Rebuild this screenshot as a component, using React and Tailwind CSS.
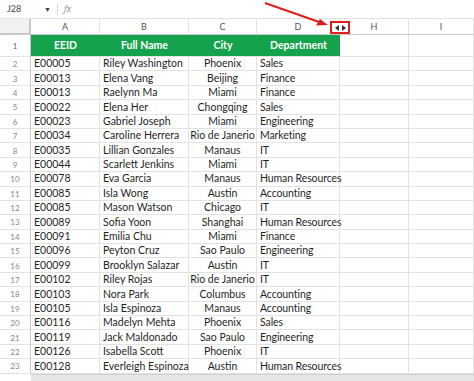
import React from "react";

const rows = [
  ["E00005", "Riley Washington", "Phoenix", "Sales"],
  ["E00013", "Elena Vang", "Beijing", "Finance"],
  ["E00013", "Raelynn Ma", "Miami", "Finance"],
  ["E00022", "Elena Her", "Chongqing", "Sales"],
  ["E00023", "Gabriel Joseph", "Miami", "Engineering"],
  ["E00034", "Caroline Herrera", "Rio de Janerio", "Marketing"],
  ["E00035", "Lillian Gonzales", "Manaus", "IT"],
  ["E00044", "Scarlett Jenkins", "Miami", "IT"],
  ["E00078", "Eva Garcia", "Manaus", "Human Resources"],
  ["E00085", "Isla Wong", "Austin", "Accounting"],
  ["E00085", "Mason Watson", "Chicago", "IT"],
  ["E00089", "Sofia Yoon", "Shanghai", "Human Resources"],
  ["E00091", "Emilia Chu", "Miami", "Finance"],
  ["E00096", "Peyton Cruz", "Sao Paulo", "Engineering"],
  ["E00099", "Brooklyn Salazar", "Austin", "IT"],
  ["E00102", "Riley Rojas", "Rio de Janerio", "IT"],
  ["E00103", "Nora Park", "Columbus", "Accounting"],
  ["E00105", "Isla Espinoza", "Manaus", "Accounting"],
  ["E00116", "Madelyn Mehta", "Phoenix", "Sales"],
  ["E00119", "Jack Maldonado", "Sao Paulo", "Engineering"],
  ["E00126", "Isabella Scott", "Phoenix", "IT"],
  ["E00128", "Everleigh Espinoza", "Austin", "Human Resources"],
];

const cell = "border-r border-b border-[#e2e3e3] flex items-center whitespace-nowrap pt-[1px]";

export default function App() {
  return (
    <div className="relative w-[474px] h-[381px] bg-white overflow-hidden text-[#1f1f1f]" style={{ fontFamily: "Lato, 'Noto Sans', sans-serif" }}>
      {/* formula bar */}
      <div className="flex items-center h-[19px] border-b border-[#e2e3e3] text-[9px] text-[#444]">
        <div className="w-[58px] flex items-center justify-between pl-[7px] pr-[6px] border-r border-[#dadce0] h-[12px]">
          <span>J28</span>
          <span className="text-[7px]">▼</span>
        </div>
        <span className="ml-[6px] italic text-[#9aa0a6] font-serif text-[10px]">fx</span>
      </div>

      {/* column letters */}
      <div className="flex h-[16px] text-[9px] text-[#555]">
        <div className="w-[31px] bg-[#f1f1f1] border-r-2 border-b-2 border-[#c8c8c8]" />
        <div className={`${cell} w-[69px] justify-center border-b-[#c8c8c8]`}>A</div>
        <div className={`${cell} w-[89px] justify-center border-b-[#c8c8c8]`}>B</div>
        <div className={`${cell} w-[68px] justify-center border-b-[#c8c8c8]`}>C</div>
        <div className={`${cell} w-[83px] justify-center border-b-[#c8c8c8]`}>D</div>
        <div className={`${cell} w-[69px] justify-center border-b-[#c8c8c8]`}>H</div>
        <div className={`${cell} flex-1 justify-center border-b-[#c8c8c8]`}>I</div>
      </div>

      {/* header row */}
      <div className="flex h-[22px] text-[10.5px]">
        <div className={`${cell} w-[31px] justify-center text-[8px] text-[#666] border-r-[#c8c8c8]`}>1</div>
        <div className="flex bg-[#14a34c] text-white font-bold border-b border-[#e2e3e3]">
          <div className="w-[69px] flex items-center justify-center">EEID</div>
          <div className="w-[89px] flex items-center justify-center">Full Name</div>
          <div className="w-[68px] flex items-center justify-center">City</div>
          <div className="w-[83px] flex items-center justify-center">Department</div>
        </div>
        <div className={`${cell} w-[69px]`} />
        <div className={`${cell} flex-1`} />
      </div>

      {/* data rows */}
      {rows.map((r, i) => (
        <div key={i} className="flex h-[14.4px] text-[10.5px]">
          <div className={`${cell} w-[31px] justify-center text-[8px] text-[#888] border-r-[#c8c8c8]`}>{i + 2}</div>
          <div className={`${cell} w-[69px] pl-[3px]`}>{r[0]}</div>
          <div className={`${cell} w-[89px] pl-[3px]`}>{r[1]}</div>
          <div className={`${cell} w-[68px] justify-center`}>{r[2]}</div>
          <div className={`${cell} w-[83px] pl-[3px] tracking-[-0.1px]`}>{r[3]}</div>
          <div className={`${cell} w-[69px]`} />
          <div className={`${cell} flex-1`} />
        </div>
      ))}

      {/* horizontal scrollbar */}
      <div className="flex h-[10px]">
        <div className="w-[31px] bg-white" />
        <div className="flex-1 bg-[#e6e6e6] border-t border-[#d0d0d0]" />
      </div>

      {/* hidden columns indicator */}
      <div className="absolute left-[330px] top-[21px] w-[20px] h-[13px] border-2 border-[#e01e1e] bg-white flex items-center justify-center gap-[3px]">
        <svg width="4" height="6" viewBox="0 0 4 6"><path d="M4 0 L0 3 L4 6 Z" fill="#333" /></svg>
        <svg width="4" height="6" viewBox="0 0 4 6"><path d="M0 0 L4 3 L0 6 Z" fill="#333" /></svg>
      </div>

      {/* red arrow */}
      <svg className="absolute left-0 top-0" width="474" height="40" viewBox="0 0 474 40">
        <line x1="265" y1="3" x2="322" y2="23" stroke="#e01e1e" strokeWidth="2" />
        <path d="M328 25 L316 25.5 L320 19 Z" fill="#e01e1e" />
      </svg>
    </div>
  );
}
